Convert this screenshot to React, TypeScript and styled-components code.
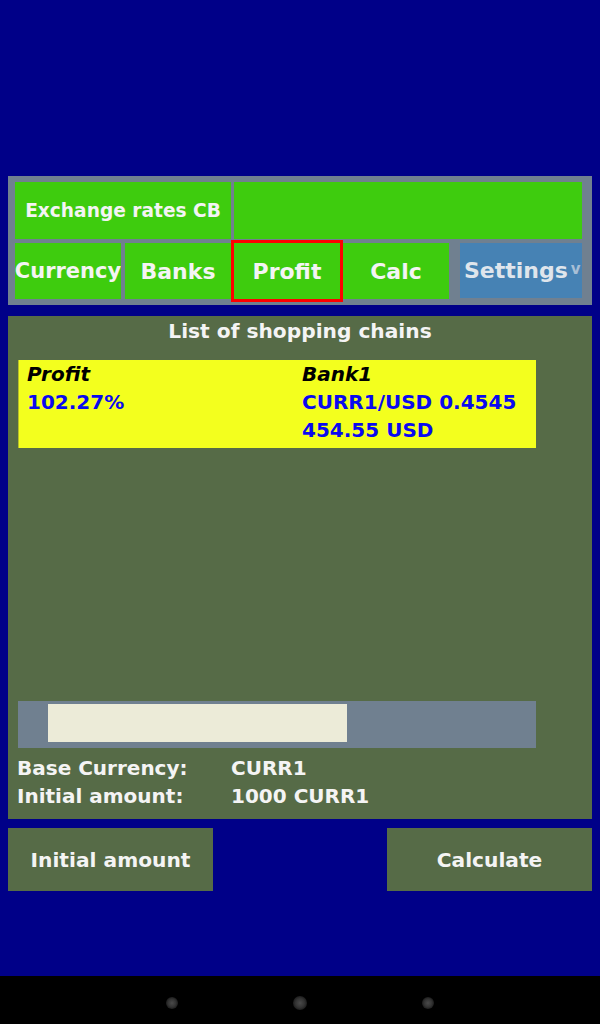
import React from "react";
import styled, { createGlobalStyle } from "styled-components";

const Global = createGlobalStyle`
  html, body { margin: 0; padding: 0; }
  body {
    background: #000088;
    font-family: "DejaVu Sans", "Liberation Sans", sans-serif;
    font-weight: bold;
  }
  * { box-sizing: border-box; }
`;

const Screen = styled.div`
  width: 600px;
  height: 1024px;
  background: #000088;
  display: flex;
  flex-direction: column;
  overflow: hidden;
`;

const Content = styled.div`
  flex: 1;
  display: flex;
  flex-direction: column;
  padding: 176px 8px 0 8px;
`;

const Frame = styled.div`
  background: #708090;
  padding: 6px 10px 6px 7px;
  display: flex;
  flex-direction: column;
  gap: 4px;
`;

const Row = styled.div`
  display: flex;
  align-items: stretch;
`;

const Cell = styled.div<{ $w?: number; $grow?: boolean; $size?: number; $ml?: number }>`
  ${(p) => (p.$grow ? "flex: 1;" : `width: ${p.$w}px; flex: none;`)}
  height: 57px;
  margin-left: ${(p) => p.$ml ?? 0}px;
  background: #3ecc0e;
  color: #f4f4f4;
  font-size: ${(p) => p.$size ?? 18.6}px;
  display: flex;
  align-items: center;
  justify-content: center;
  white-space: nowrap;
`;

const Tab = styled.div<{ $w: number; $size?: number; $ml?: number }>`
  width: ${(p) => p.$w}px;
  flex: none;
  height: 56px;
  margin-left: ${(p) => p.$ml ?? 0}px;
  background: #3ecc0e;
  color: #f4f4f4;
  font-size: ${(p) => p.$size ?? 22}px;
  display: flex;
  align-items: center;
  justify-content: center;
  white-space: nowrap;
  overflow: hidden;
`;

const ActiveTab = styled(Tab)`
  height: 62px;
  margin-top: -3px;
  margin-bottom: -3px;
  border: 3px solid #ff0000;
  position: relative;
  z-index: 1;
`;

const SettingsTab = styled(Tab)`
  background: #4682b4;
  color: #dfe5ec;
  height: 55px;
  justify-content: flex-start;
  padding-left: 4px;
`;

const Chevron = styled.span`
  font-size: 15px;
  color: #a8bfd6;
  margin-left: 3px;
  margin-top: -4px;
  font-weight: bold;
`;

const Panel = styled.div`
  margin-top: 11px;
  height: 503px;
  background: #566b47;
  display: flex;
  flex-direction: column;
  padding: 0 0 9px 0;
`;

const Title = styled.div`
  color: #f4f4f4;
  font-size: 20.2px;
  line-height: 30px;
  text-align: center;
`;

const Card = styled.div`
  margin: 14px 0 0 10px;
  width: 518px;
  height: 88px;
  background: #f3ff1e;
  border-left: 1px solid #b6bf2a;
  display: grid;
  grid-template-columns: 275px 1fr;
  padding-left: 8px;
`;

const CardCol = styled.div`
  display: flex;
  flex-direction: column;
`;

const CardHead = styled.div`
  color: #000000;
  font-style: italic;
  font-size: 20px;
  line-height: 28px;
`;

const CardValue = styled.div`
  color: #0a0aee;
  font-size: 20px;
  line-height: 28px;
  white-space: nowrap;
`;

const Spacer = styled.div`
  flex: 1;
`;

const ScrollTrack = styled.div`
  margin-left: 10px;
  width: 518px;
  height: 47px;
  background: #708090;
  padding: 3px 0 0 30px;
`;

const ScrollThumb = styled.div`
  width: 299px;
  height: 38px;
  background: #ecebd8;
`;

const Info = styled.div`
  margin-top: 6px;
  padding-left: 9px;
  display: grid;
  grid-template-columns: 214px 1fr;
  color: #f4f4f4;
  font-size: 20px;
  line-height: 28px;
  white-space: nowrap;
`;

const Buttons = styled.div`
  margin-top: 9px;
  display: flex;
  justify-content: space-between;
`;

const Button = styled.div<{ $w: number }>`
  width: ${(p) => p.$w}px;
  height: 63px;
  background: #566b47;
  color: #f4f4f4;
  font-size: 20.2px;
  display: flex;
  align-items: center;
  justify-content: center;
`;

const NavBar = styled.div`
  height: 48px;
  background: #000000;
  display: flex;
  align-items: center;
  justify-content: center;
  gap: 115px;
  padding-top: 6px;
`;

const Dot = styled.div<{ $s: number }>`
  width: ${(p) => p.$s}px;
  height: ${(p) => p.$s}px;
  border-radius: 50%;
  background: radial-gradient(circle, #4a4a4a 0%, #333 45%, #151515 80%, #000 100%);
`;

export default function App() {
  return (
    <>
      <Global />
      <Screen>
        <Content>
          <Frame>
            <Row>
              <Cell $w={216}>Exchange rates CB</Cell>
              <Cell $grow $ml={3} />
            </Row>
            <Row>
              <Tab $w={106} $size={21}>Currency</Tab>
              <Tab $w={106} $ml={4}>Banks</Tab>
              <ActiveTab $w={112}>Profit</ActiveTab>
              <Tab $w={106}>Calc</Tab>
              <SettingsTab $w={122} $ml={11}>
                Settings<Chevron>v</Chevron>
              </SettingsTab>
            </Row>
          </Frame>
          <Panel>
            <Title>List of shopping chains</Title>
            <Card>
              <CardCol>
                <CardHead>Profit</CardHead>
                <CardValue>102.27%</CardValue>
              </CardCol>
              <CardCol>
                <CardHead>Bank1</CardHead>
                <CardValue>CURR1/USD 0.4545</CardValue>
                <CardValue>454.55 USD</CardValue>
              </CardCol>
            </Card>
            <Spacer />
            <ScrollTrack>
              <ScrollThumb />
            </ScrollTrack>
            <Info>
              <span>Base Currency:</span>
              <span>CURR1</span>
              <span>Initial amount:</span>
              <span>1000 CURR1</span>
            </Info>
          </Panel>
          <Buttons>
            <Button $w={205}>Initial amount</Button>
            <Button $w={205}>Calculate</Button>
          </Buttons>
        </Content>
        <NavBar>
          <Dot $s={12} />
          <Dot $s={14} />
          <Dot $s={12} />
        </NavBar>
      </Screen>
    </>
  );
}
